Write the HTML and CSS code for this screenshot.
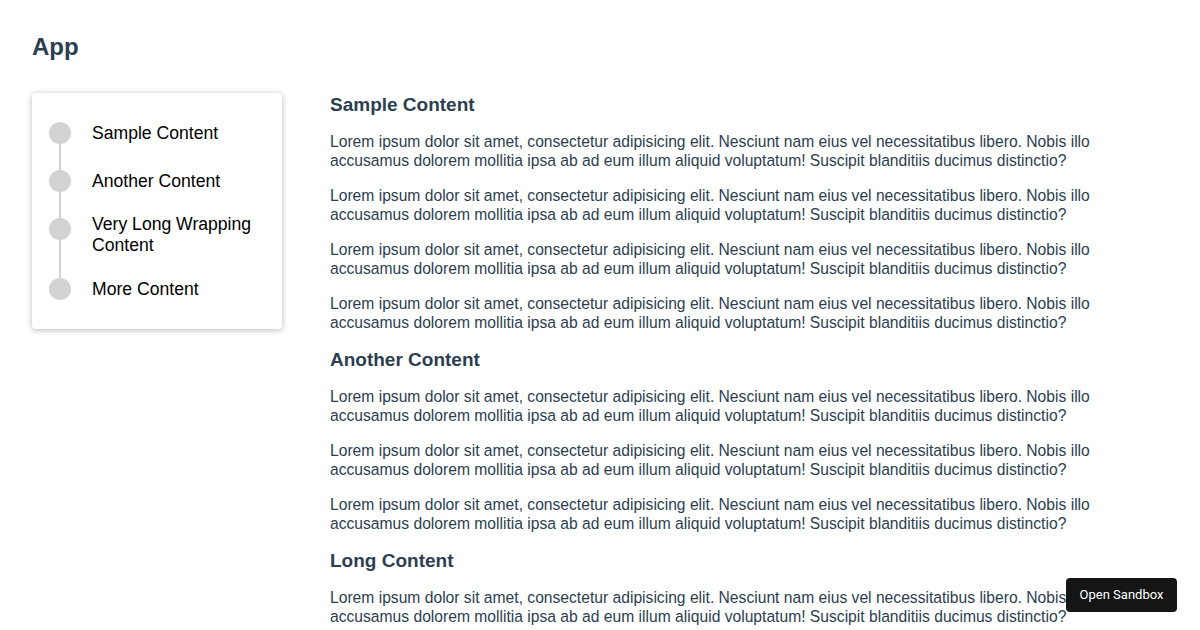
FILE: index.html
```html
<!DOCTYPE html>
<html lang="en">
<head>
<meta charset="utf-8">
<title>App</title>
<link rel="stylesheet" href="styles.css">
</head>
<body>
<div class="app">
  <h2 class="app-title">App</h2>
  <div class="layout">
    <nav class="toc">
      <ul class="toc-list">
        <li class="toc-item"><span class="dot"></span><span class="toc-text">Sample Content</span></li>
        <li class="toc-item"><span class="dot"></span><span class="toc-text">Another Content</span></li>
        <li class="toc-item"><span class="dot"></span><span class="toc-text">Very Long Wrapping Content</span></li>
        <li class="toc-item"><span class="dot"></span><span class="toc-text">More Content</span></li>
      </ul>
    </nav>
    <main class="content">
      <section class="section">
        <h3>Sample Content</h3>
        <p>Lorem ipsum dolor sit amet, consectetur adipisicing elit. Nesciunt nam eius vel necessitatibus libero. Nobis illo accusamus dolorem mollitia ipsa ab ad eum illum aliquid voluptatum! Suscipit blanditiis ducimus distinctio?</p>
        <p>Lorem ipsum dolor sit amet, consectetur adipisicing elit. Nesciunt nam eius vel necessitatibus libero. Nobis illo accusamus dolorem mollitia ipsa ab ad eum illum aliquid voluptatum! Suscipit blanditiis ducimus distinctio?</p>
        <p>Lorem ipsum dolor sit amet, consectetur adipisicing elit. Nesciunt nam eius vel necessitatibus libero. Nobis illo accusamus dolorem mollitia ipsa ab ad eum illum aliquid voluptatum! Suscipit blanditiis ducimus distinctio?</p>
        <p>Lorem ipsum dolor sit amet, consectetur adipisicing elit. Nesciunt nam eius vel necessitatibus libero. Nobis illo accusamus dolorem mollitia ipsa ab ad eum illum aliquid voluptatum! Suscipit blanditiis ducimus distinctio?</p>
      </section>
      <section class="section">
        <h3>Another Content</h3>
        <p>Lorem ipsum dolor sit amet, consectetur adipisicing elit. Nesciunt nam eius vel necessitatibus libero. Nobis illo accusamus dolorem mollitia ipsa ab ad eum illum aliquid voluptatum! Suscipit blanditiis ducimus distinctio?</p>
        <p>Lorem ipsum dolor sit amet, consectetur adipisicing elit. Nesciunt nam eius vel necessitatibus libero. Nobis illo accusamus dolorem mollitia ipsa ab ad eum illum aliquid voluptatum! Suscipit blanditiis ducimus distinctio?</p>
        <p>Lorem ipsum dolor sit amet, consectetur adipisicing elit. Nesciunt nam eius vel necessitatibus libero. Nobis illo accusamus dolorem mollitia ipsa ab ad eum illum aliquid voluptatum! Suscipit blanditiis ducimus distinctio?</p>
      </section>
      <section class="section">
        <h3>Long Content</h3>
        <p>Lorem ipsum dolor sit amet, consectetur adipisicing elit. Nesciunt nam eius vel necessitatibus libero. Nobis illo accusamus dolorem mollitia ipsa ab ad eum illum aliquid voluptatum! Suscipit blanditiis ducimus distinctio?</p>
        <p>Lorem ipsum dolor sit amet, consectetur adipisicing elit. Nesciunt nam eius vel necessitatibus libero. Nobis illo accusamus dolorem mollitia ipsa ab ad eum illum aliquid voluptatum! Suscipit blanditiis ducimus distinctio?</p>
      </section>
    </main>
  </div>
</div>
<a class="sandbox-btn" href="#">Open Sandbox</a>
</body>
</html>
```

FILE: styles.css
```css
html, body {
  margin: 0;
  padding: 0;
  background: #ffffff;
}

body {
  font-family: "Liberation Sans", Arial, Helvetica, sans-serif;
  color: #2c3e50;
}

.app {
  padding: 33px 32px 0 32px;
}

.app-title {
  margin: 0 0 32px 0;
  font-size: 24px;
  line-height: 27.6px;
  font-weight: bold;
  color: #2c3e50;
}

.layout {
  display: flex;
  align-items: flex-start;
  gap: 48px;
}

.toc {
  flex: 0 0 250px;
  width: 250px;
  box-sizing: border-box;
  background: #ffffff;
  border-radius: 4px;
  box-shadow: 0 1px 6px rgba(0, 0, 0, 0.28);
  padding: 16.5px 16px 15.5px 0;
}

.toc-list {
  list-style: none;
  margin: 0;
  padding: 0;
  position: relative;
}

.toc-list::before {
  content: "";
  position: absolute;
  left: 27px;
  top: 24px;
  bottom: 24px;
  width: 2px;
  background: #d3d3d3;
}

.toc-item {
  position: relative;
  display: flex;
  align-items: center;
  box-sizing: border-box;
  min-height: 48px;
  padding: 9px 0 9px 60px;
  color: #000000;
  font-size: 17.6px;
  line-height: 21px;
}

.dot {
  position: absolute;
  left: 17px;
  top: 12.5px;
  width: 22px;
  height: 22px;
  border-radius: 50%;
  background: #d3d3d3;
}

.content {
  flex: 1 1 auto;
  min-width: 0;
  padding-top: 1px;
}

.section h3 {
  margin: 17px 0 16.5px 0;
  font-size: 19px;
  line-height: 21.5px;
  font-weight: bold;
  color: #2c3e50;
}

.section:first-child h3 {
  margin-top: 0;
}

.section p {
  margin: 16px 0;
  font-size: 15.65px;
  line-height: 19px;
}

.sandbox-btn {
  position: fixed;
  right: 23px;
  bottom: 18px;
  display: block;
  box-sizing: border-box;
  width: 111px;
  height: 34px;
  line-height: 34px;
  text-align: center;
  background: #151515;
  color: #ffffff;
  border-radius: 4px;
  font-family: Roboto, "Liberation Sans", Arial, sans-serif;
  font-size: 13px;
  text-decoration: none;
}
```
